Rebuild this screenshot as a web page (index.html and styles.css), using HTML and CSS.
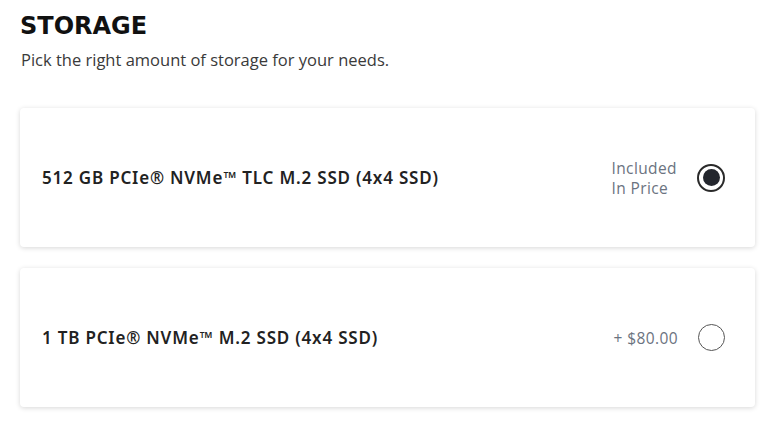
FILE: index.html
```html
<!DOCTYPE html>
<html lang="en">
<head>
    <meta charset="UTF-8">
    <title>Storage</title>
    <link rel="stylesheet" href="styles.css">
</head>
<body>
    <div class="section">
        <h2 class="title">STORAGE</h2>
        <p class="subtitle">Pick the right amount of storage for your needs.</p>

        <div class="options">
            <label class="option">
                <span class="name">512 GB PCIe® NVMe™ TLC M.2 SSD (4x4 SSD)</span>
                <span class="price">Included<br>In Price</span>
                <span class="radio checked"></span>
            </label>
            <label class="option">
                <span class="name">1 TB PCIe® NVMe™ M.2 SSD (4x4 SSD)</span>
                <span class="price">+ $80.00</span>
                <span class="radio"></span>
            </label>
        </div>
    </div>
</body>
</html>
```

FILE: styles.css
```css
body {
    margin: 0;
    background-color: #ffffff;
    font-family: "Open Sans", "Noto Sans", sans-serif;
    color: #1a1a1a;
}
.section {
    padding: 10px 13px 16px 20px;
}
.title {
    margin: 0;
    font-family: "DejaVu Sans", sans-serif;
    font-size: 24px;
    font-weight: bold;
    line-height: 32px;
    color: #111;
}
.subtitle {
    margin: 8px 0 0 1px;
    font-size: 16.5px;
    line-height: 20px;
    color: #3a3a3a;
}
.options {
    display: flex;
    flex-direction: column;
    gap: 21px;
    margin-top: 38px;
}
.option {
    display: flex;
    align-items: center;
    height: 139px;
    padding: 0 30px 0 22px;
    background-color: #fff;
    border-radius: 4px;
    box-shadow: 0 1px 5px rgba(0,0,0,0.16);
}
.name {
    flex: 1;
    font-family: "Noto Sans", sans-serif;
    font-size: 17px;
    font-weight: 600;
    letter-spacing: 0.8px;
    color: #222;
}
.price {
    font-size: 15.5px;
    line-height: 20px;
    letter-spacing: 0.4px;
    color: #6b7380;
    margin-right: 20px;
}
.radio {
    width: 25px;
    height: 25px;
    border: 1.5px solid #555;
    border-radius: 50%;
    display: flex;
    align-items: center;
    justify-content: center;
}
.radio.checked {
    border: 2px solid #2a2a2a;
    width: 24px;
    height: 24px;
}
.radio.checked::after {
    content: "";
    width: 17px;
    height: 17px;
    border-radius: 50%;
    background-color: #23262d;
}
```
